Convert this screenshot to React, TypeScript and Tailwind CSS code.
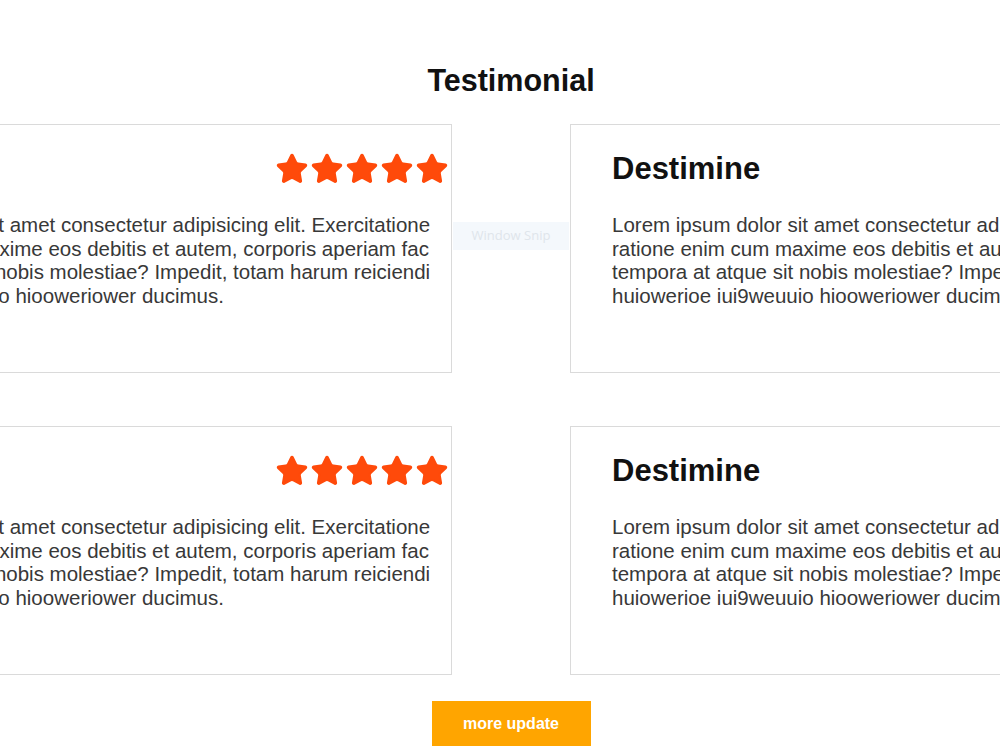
import { Star } from 'lucide-react';

const body =
  'Lorem ipsum dolor sit amet consectetur adipisicing elit. Exercitatione ratione enim cum maxime eos debitis et autem, corporis aperiam fac tempora at atque sit nobis molestiae? Impedit, totam harum reiciendi huiowerioe iui9weuuio hiooweriower ducimus.';

function Stars() {
  return (
    <div className="flex items-center gap-[1px]">
      {[0, 1, 2, 3, 4].map((i) => (
        <Star key={i} size={34} strokeWidth={1.5} className="fill-[#ff4a0a] text-[#ff4a0a]" />
      ))}
    </div>
  );
}

function Card() {
  return (
    <div className="h-[249px] border border-[#dadada] bg-white pl-[41px] pr-[2px] pt-[26px]">
      <div className="flex items-center justify-between">
        <h3 className="text-[31px] leading-[36px] font-bold text-[#111]">Destimine</h3>
        <Stars />
      </div>
      <p className="mt-[26px] pr-[12px] text-[20.5px] leading-[23.6px] text-[#383838]">{body}</p>
    </div>
  );
}

export default function App() {
  return (
    <div
      className="relative min-h-[750px] w-full overflow-hidden bg-white"
      style={{ fontFamily: '"Liberation Sans", Arial, sans-serif' }}
    >
      <div className="flex flex-col items-center pl-[22px] pt-[62px]">
        <h2 className="text-[30.5px] leading-[36px] font-bold text-[#111]">Testimonial</h2>

        <div className="mt-[26px] grid shrink-0 grid-cols-[686px_686px] gap-x-[118px] gap-y-[53px]">
          <Card />
          <Card />
          <Card />
          <Card />
        </div>

        <button className="mt-[26px] h-[45px] w-[159px] bg-[#ffa500] text-[16px] font-bold text-white">
          more update
        </button>
      </div>

      {/* snipping tool leftover */}
      <div
        className="absolute left-[453px] top-[222px] flex h-[28px] w-[116px] items-center justify-center bg-[#f4f8fc] text-[13px] text-[#dfe5eb]"
        style={{ fontFamily: '"Open Sans", sans-serif' }}
      >
        Window Snip
      </div>
    </div>
  );
}
